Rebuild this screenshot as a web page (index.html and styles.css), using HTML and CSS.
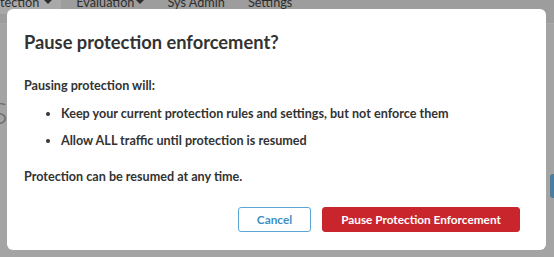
FILE: index.html
```html
<!DOCTYPE html>
<html>
<head>
<meta charset="utf-8">
<link rel="stylesheet" href="styles.css">
</head>
<body>
<div class="page">
  <nav class="nav">
    <div class="nav-item active">Protection<span class="caret caret-spaced"></span></div>
    <div class="nav-item">Evaluation<span class="caret"></span></div>
    <div class="nav-item">Sys Admin</div>
    <div class="nav-item">Settings</div>
  </nav>
  <div class="content">
    <div class="page-title">Status</div>
    <div class="side-tab"></div>
  </div>
</div>

<div class="modal">
  <h2 class="modal-title">Pause protection enforcement?</h2>
  <div class="modal-body">
    <p class="lead">Pausing protection will:</p>
    <ul class="list">
      <li>Keep your current protection rules and settings, but not enforce them</li>
      <li>Allow ALL traffic until protection is resumed</li>
    </ul>
    <p class="note">Protection can be resumed at any time.</p>
  </div>
  <div class="modal-footer">
    <button class="btn btn-cancel">Cancel</button>
    <button class="btn btn-danger">Pause Protection Enforcement</button>
  </div>
</div>
</body>
</html>
```

FILE: styles.css
```css
html, body {
  margin: 0;
  padding: 0;
}
body {
  width: 554px;
  height: 257px;
  overflow: hidden;
  background: #a4a4a4;
  font-family: Lato, "Noto Sans", sans-serif;
  position: relative;
}
.page {
  display: flex;
  flex-direction: column;
}
.nav {
  display: flex;
  gap: 23px;
  height: 31px;
  margin-top: -8px;
  background: #9d9d9d;
  border-bottom: 1px solid #a9a9a9;
  font-size: 12.7px;
  color: #2e2e2e;
}
.nav-item {
  height: 22px;
  line-height: 20px;
  display: flex;
  align-items: flex-start;
  white-space: pre;
}
.nav-item.active {
  background: #a9a9a9;
  margin-left: -19px;
  padding: 0 9px 0 0;
  margin-right: -8px;
}
.caret {
  display: inline-block;
  width: 0;
  height: 0;
  border-left: 4px solid transparent;
  border-right: 4px solid transparent;
  border-top: 4px solid #2e2e2e;
  margin-top: 8px;
  margin-left: 2px;
}
.caret-spaced {
  margin-left: 5px;
}
.content {
  position: relative;
  height: 225px;
}
.page-title {
  font-family: "Open Sans", sans-serif;
  font-weight: 300;
  font-size: 30px;
  line-height: normal;
  letter-spacing: 4px;
  color: #6e6e6e;
  margin-left: -9px;
  margin-top: 68px;
}
.side-tab {
  position: absolute;
  right: -6px;
  top: 150px;
  width: 10px;
  height: 24px;
  border-radius: 3px;
  background: #4c7d9c;
}

.modal {
  position: absolute;
  left: 7px;
  top: 9px;
  width: 539px;
  height: 241px;
  background: #fff;
  border-radius: 6px;
  box-sizing: border-box;
  padding: 22px 26px 0 17px;
  display: flex;
  flex-direction: column;
  color: #333;
}
.modal-title {
  margin: 0;
  font-size: 18.3px;
  line-height: 22px;
  font-weight: 700;
  color: #333;
}
.modal-body {
  font-size: 12.6px;
  line-height: 17px;
  font-weight: 700;
  padding-top: 24px;
}
.lead {
  margin: 0;
}
.list {
  margin: 11px 0 0 0;
  padding-left: 37px;
}
.list li {
  margin-bottom: 10px;
}
.note {
  margin: 19px 0 0 0;
}
.modal-footer {
  display: flex;
  justify-content: flex-end;
  gap: 11px;
  margin-top: 22px;
}
.btn {
  font-family: Lato, "Noto Sans", sans-serif;
  font-weight: 700;
  font-size: 11.8px;
  height: 25px;
  border-radius: 3px;
  padding: 0;
  cursor: pointer;
}
.btn-cancel {
  width: 73px;
  background: #fff;
  border: 1px solid #5aa6d6;
  color: #3d8fc6;
}
.btn-danger {
  width: 198px;
  background: #c8252c;
  border: 1px solid #c8252c;
  color: #fff;
}
```
